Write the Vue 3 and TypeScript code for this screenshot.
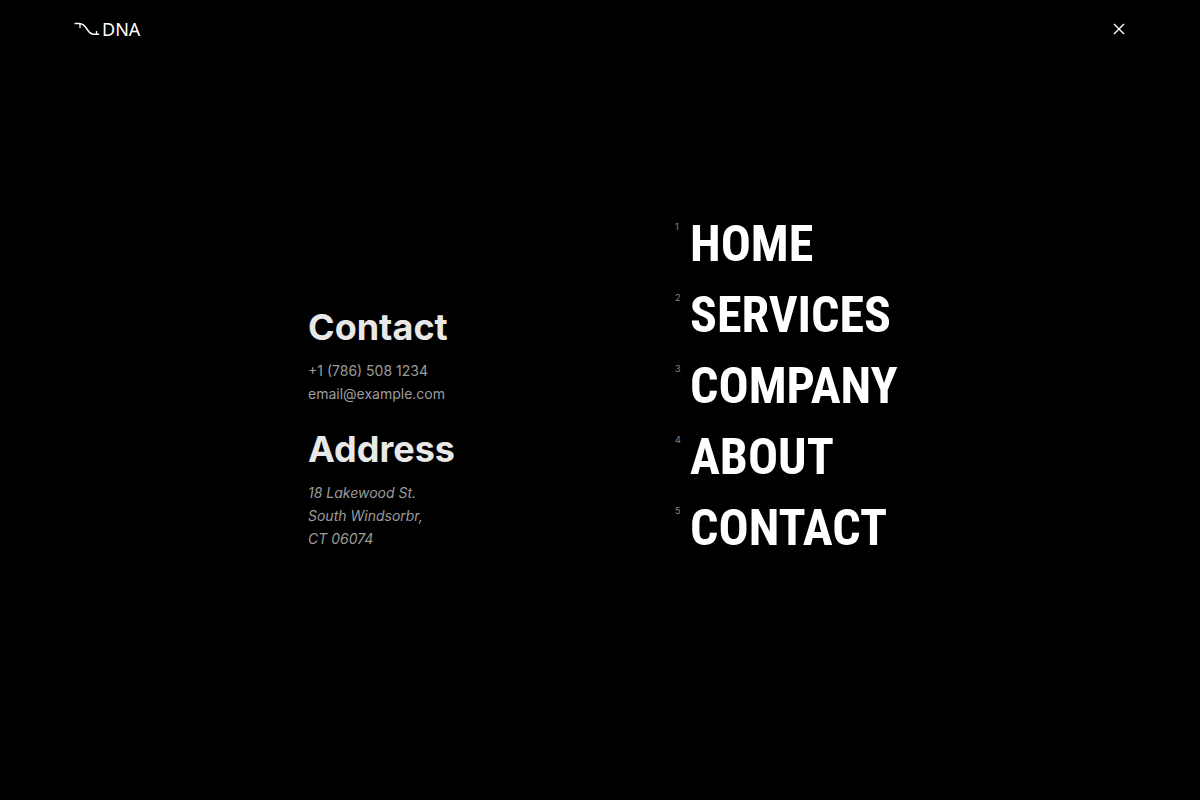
<script setup lang="ts">
interface MenuItem {
  label: string
  href: string
}

const menu: MenuItem[] = [
  { label: 'HOME', href: '#home' },
  { label: 'SERVICES', href: '#services' },
  { label: 'COMPANY', href: '#company' },
  { label: 'ABOUT', href: '#about' },
  { label: 'CONTACT', href: '#contact' },
]
</script>

<template>
  <div class="overlay">
    <header class="bar">
      <a class="brand" href="#home">
        <svg width="26" height="14" viewBox="0 0 26 14" aria-hidden="true">
          <path d="M0.5 1.5H5C14 1.5 12 12.3 20 12.3H25" fill="none" stroke="#fff" stroke-width="1.6" />
          <path d="M6 1.5V6M22.5 12.5V9" fill="none" stroke="#fff" stroke-width="1.3" />
        </svg>
        <span>DNA</span>
      </a>
      <button class="close" type="button" aria-label="Close menu">
        <svg width="12" height="12" viewBox="0 0 12 12" aria-hidden="true">
          <path d="M1 1L11 11M11 1L1 11" fill="none" stroke="#fff" stroke-width="1.4" />
        </svg>
      </button>
    </header>
    <main class="content">
      <section class="info">
        <h2>Contact</h2>
        <p>
          <a href="tel:+17865081234">+1 (786) 508 1234</a><br />
          <a href="mailto:email@example.com">email@example.com</a>
        </p>
        <h2>Address</h2>
        <address>18 Lakewood St.<br />South Windsorbr,<br />CT 06074</address>
      </section>
      <nav aria-label="Main">
        <ol>
          <li v-for="(item, i) in menu" :key="item.label">
            <span class="num">{{ i + 1 }}</span>
            <a :href="item.href">{{ item.label }}</a>
          </li>
        </ol>
      </nav>
    </main>
  </div>
</template>

<style>
body {
  margin: 0;
  background: #000;
}
</style>

<style scoped>
.overlay {
  min-height: 100vh;
  box-sizing: border-box;
  display: flex;
  flex-direction: column;
  background: #000;
  color: #fff;
  font-family: Inter, "Liberation Sans", sans-serif;
}
a {
  color: inherit;
  text-decoration: none;
}
.bar {
  display: flex;
  align-items: center;
  justify-content: space-between;
  padding: 17px 75px 18px 74px;
}
.brand {
  display: flex;
  align-items: center;
  gap: 2px;
  font-family: "Noto Sans", sans-serif;
  font-size: 18px;
  line-height: 24px;
}
.close {
  display: flex;
  padding: 0;
  border: 0;
  background: none;
  cursor: pointer;
}
.content {
  flex: 1;
  display: grid;
  grid-template-columns: 367px 225px;
  justify-content: center;
  align-content: center;
  align-items: end;
  padding: 0 0 86px 8px;
}
.info {
  padding-bottom: 14px;
}
h2 {
  margin: 0 0 12px;
  font-size: 36px;
  line-height: 40px;
  font-weight: 700;
  color: #e8e8e8;
}
p,
address {
  margin: 0;
  font-size: 14px;
  line-height: 23px;
  color: #9c9c9c;
}
p {
  margin-bottom: 24px;
}
ol {
  list-style: none;
  margin: 0;
  padding: 0;
}
li {
  display: flex;
}
.num {
  flex: none;
  width: 15px;
  padding-top: 12px;
  font-size: 9px;
  line-height: 12px;
  color: #8c8c8c;
}
li a {
  font-family: "Roboto Condensed", Roboto, sans-serif;
  font-size: 50px;
  line-height: 71px;
  font-weight: 700;
}
</style>
